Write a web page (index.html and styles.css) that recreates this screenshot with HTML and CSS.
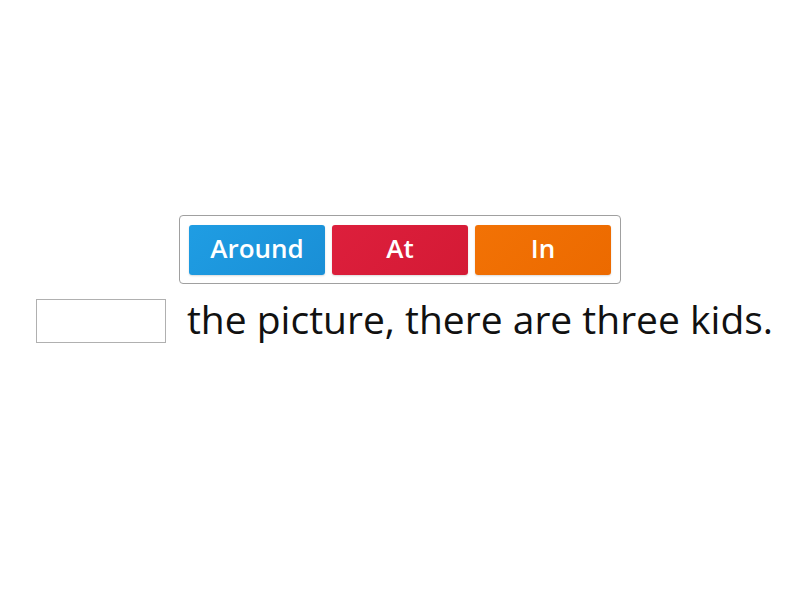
FILE: index.html
```html
<!DOCTYPE html>
<html>
<head>
<meta charset="utf-8">
<link rel="stylesheet" href="styles.css">
</head>
<body>
<main class="stage">
  <div class="choices">
    <div class="chip chip-blue">Around</div>
    <div class="chip chip-red">At</div>
    <div class="chip chip-orange">In</div>
  </div>
  <div class="sentence">
    <div class="blank"></div>
    <span class="text">the picture, there are three kids.</span>
  </div>
</main>
</body>
</html>
```
FILE: styles.css
```css
html, body {
  margin: 0;
  padding: 0;
  background: #ffffff;
}
body {
  width: 800px;
  height: 600px;
  font-family: "Open Sans", "Liberation Sans", sans-serif;
}
.stage {
  display: flex;
  flex-direction: column;
  align-items: center;
  padding-top: 215px;
}
.choices {
  display: flex;
  gap: 7px;
  padding: 9px 9px 8px 9px;
  border: 1px solid #a0a0a0;
  border-radius: 4px;
  background: #fff;
}
.chip {
  width: 136px;
  height: 50px;
  box-sizing: border-box;
  padding-bottom: 5px;
  border-radius: 3px;
  color: #fff;
  font-weight: 600;
  font-size: 26px;
  display: flex;
  align-items: center;
  justify-content: center;
  box-shadow: 0 1px 2px rgba(0,0,0,0.15);
}
.chip-blue { background: linear-gradient(135deg, #1f9de3, #1a8fd6); }
.chip-red { background: linear-gradient(135deg, #dd1f3c, #d41a35); }
.chip-orange { background: linear-gradient(135deg, #f27205, #ec6a00); }
.sentence {
  display: flex;
  align-items: center;
  gap: 21px;
  margin-top: 10px;
  margin-left: 9px;
}
.blank {
  width: 128px;
  height: 42px;
  border: 1px solid #b0b0b0;
  background: #fff;
}
.text {
  font-size: 39px;
  line-height: 50px;
  padding-bottom: 4px;
  color: #111;
  white-space: nowrap;
}
```
